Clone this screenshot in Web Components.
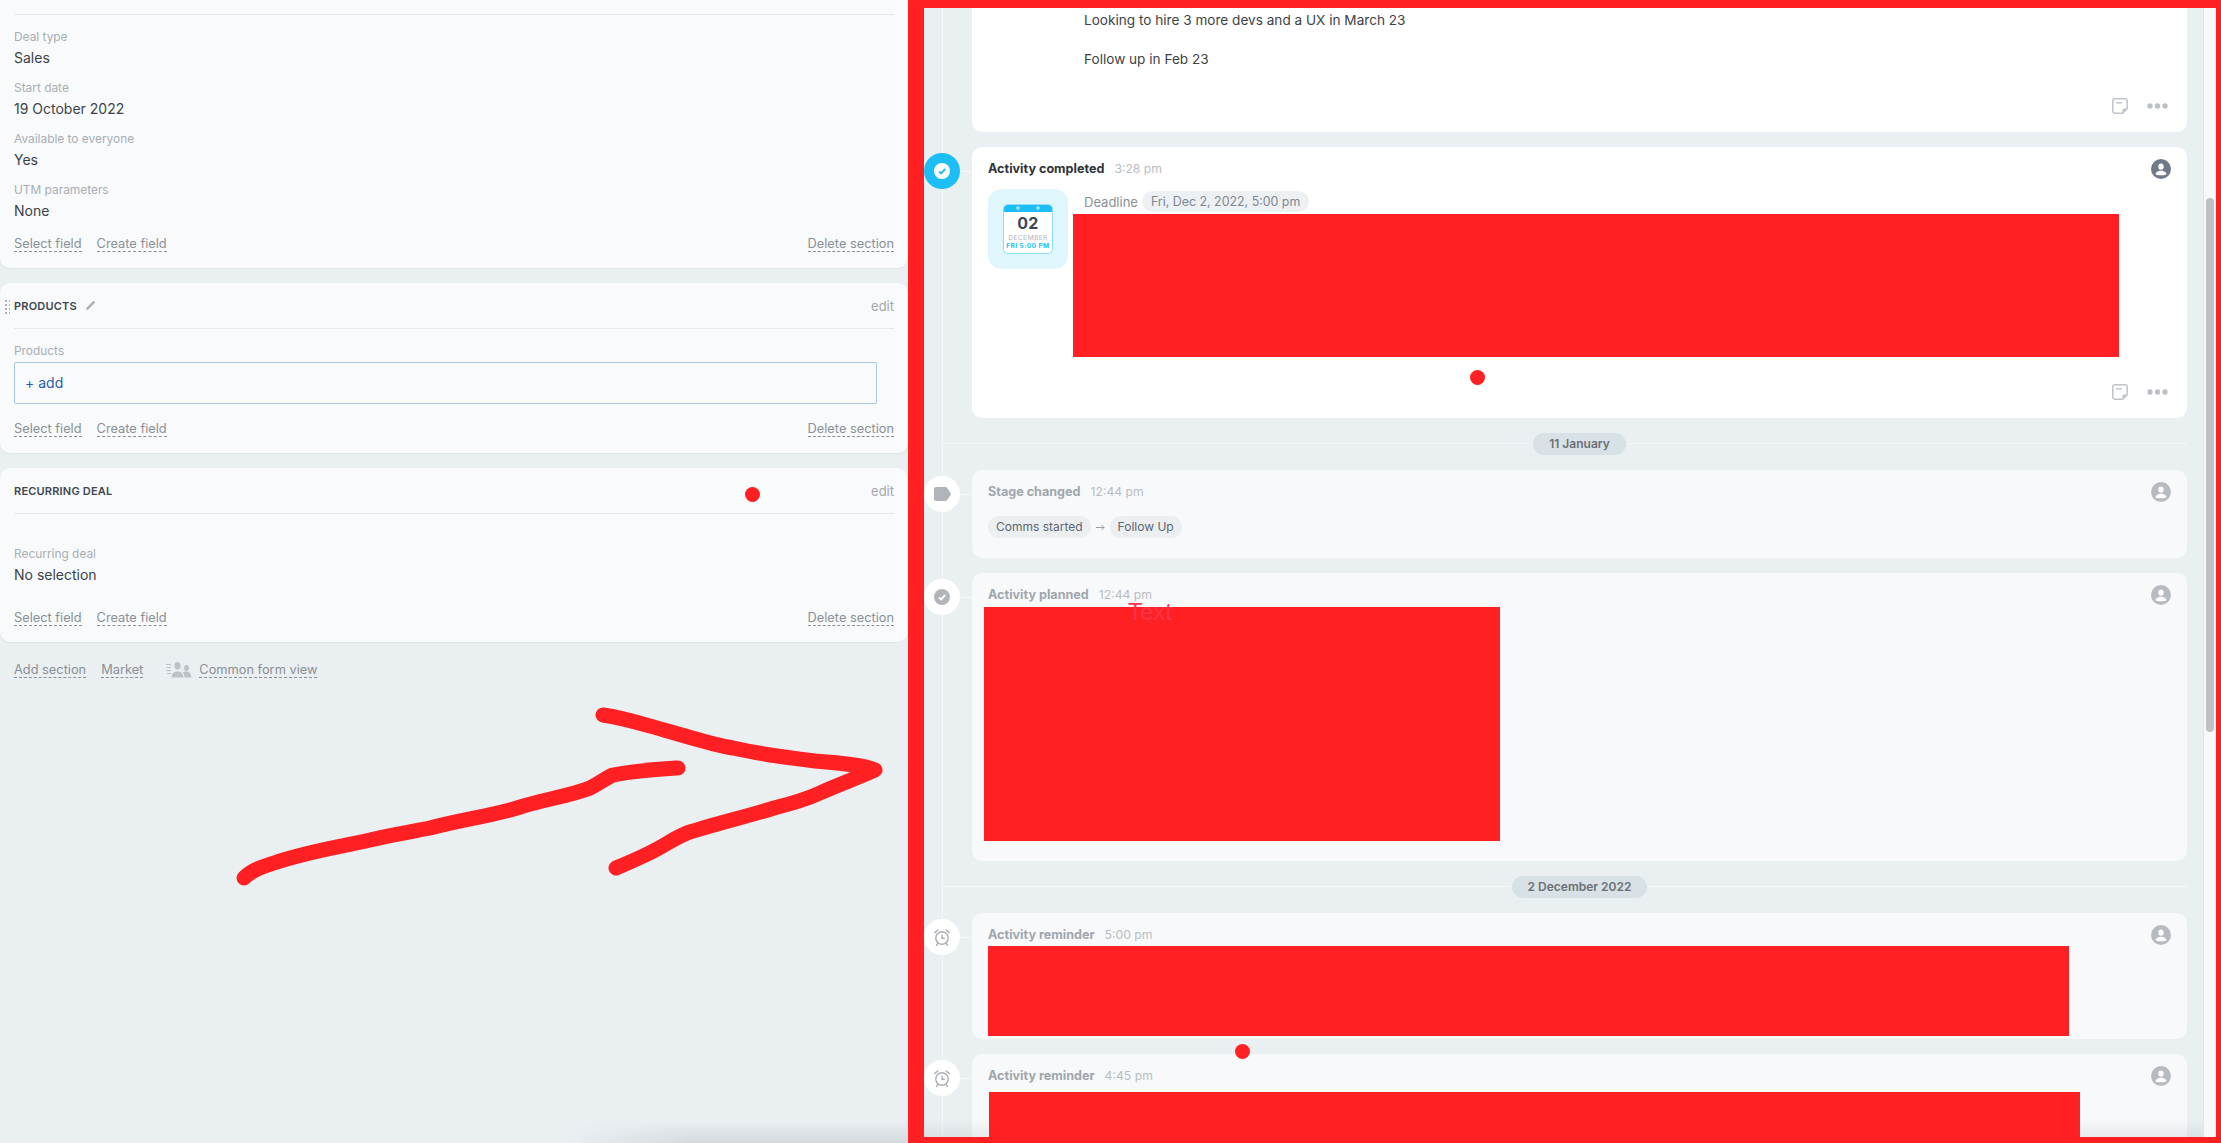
<!DOCTYPE html>
<html lang="en">
<head>
<meta charset="utf-8">
<title>Deal</title>
<style>
    html, body { margin: 0; height: 100%; overflow: hidden; }
    body { font-family: Inter, "Liberation Sans", sans-serif; background: #eaeff2; color: #3d4248; }
</style>
</head>
<body>
<deal-page>
    <deal-panel slot="left">
        <form-card style="--body-top: 14px; --foot-gap: 15px" flat>
            <form-field><span slot="label">Deal type</span>Sales</form-field>
            <form-field><span slot="label">Start date</span>19 October 2022</form-field>
            <form-field><span slot="label">Available to everyone</span>Yes</form-field>
            <form-field><span slot="label">UTM parameters</span>None</form-field>
        </form-card>
        <form-card style="--body-top: 14px; --foot-gap: 17px">
            <span slot="title">PRODUCTS</span>
            <drag-handle slot="drag"></drag-handle>
            <edit-pencil slot="pencil"></edit-pencil>
            <form-field><span slot="label">Products</span><add-box>+ add</add-box></form-field>
        </form-card>
        <form-card style="--body-top: 32px; --foot-gap: 25px">
            <span slot="title">RECURRING DEAL</span>
            <form-field><span slot="label">Recurring deal</span>No selection</form-field>
        </form-card>
        <panel-links></panel-links>
    </deal-panel>

    <activity-feed slot="right">
        <feed-item top>
            <note-card plain>
                <p>Looking to hire 3 more devs and a UX in March 23</p>
                <p>&nbsp;</p>
                <p>Follow up in Feb 23</p>
            </note-card>
        </feed-item>
        <feed-item kind="done" active>
            <item-head active><span slot="title">Activity completed</span><span slot="time">3:28 pm</span></item-head>
            <deadline-body></deadline-body>
        </feed-item>
        <date-sep>11 January</date-sep>
        <feed-item kind="tag">
            <item-head><span slot="title">Stage changed</span><span slot="time">12:44 pm</span></item-head>
            <stage-pills></stage-pills>
        </feed-item>
        <feed-item kind="check">
            <item-head><span slot="title">Activity planned</span><span slot="time">12:44 pm</span></item-head>
            <red-block style="--w: 516px; --h: 234px; --l: 12px; --t: 2px; --b: 20px"></red-block>
        </feed-item>
        <date-sep>2 December 2022</date-sep>
        <feed-item kind="alarm">
            <item-head><span slot="title">Activity reminder</span><span slot="time">5:00 pm</span></item-head>
            <red-block style="--w: 1081px; --h: 90px; --l: 16px; --t: 1px; --b: 3px"></red-block>
        </feed-item>
        <feed-item kind="alarm">
            <item-head><span slot="title">Activity reminder</span><span slot="time">4:45 pm</span></item-head>
            <red-block style="--w: 1091px; --h: 60px; --l: 17px; --t: 6px; --b: 0px"></red-block>
        </feed-item>
    </activity-feed>
</deal-page>
<red-marks></red-marks>

<script>
const checkPath = 'M5 8.3l2.1 2.1L11.2 6'
const icons = {
    avatar: (color) => `<svg width="20" height="20" viewBox="0 0 20 20"><circle cx="10" cy="10" r="10" fill="${color}"/><ellipse cx="10" cy="7.6" rx="2.7" ry="3.2" fill="#fff"/><path d="M4.6 14.9c0-1.9 3-2.6 4-3.1h2.8c1 .5 4 1.2 4 3.1 0 .6-2 1.3-5.4 1.3s-5.4-.7-5.4-1.3z" fill="#fff"/></svg>`,
    note: `<svg width="16" height="16" viewBox="0 0 16 16"><path d="M3 .8h10A2.2 2.2 0 0 1 15.2 3v7.6l-4.6 4.6H3A2.2 2.2 0 0 1 .8 13V3A2.2 2.2 0 0 1 3 .8z" fill="none" stroke="#bfc4ca" stroke-width="1.5"/><path d="M10.4 15.2v-3.1a1.6 1.6 0 0 1 1.6-1.6h3.2z" fill="#bfc4ca"/><path d="M4 4.8h6" stroke="#bfc4ca" stroke-width="1.4"/></svg>`,
    dots: `<svg width="21" height="6" viewBox="0 0 21 6" fill="#bcc1c7"><circle cx="3" cy="3" r="2.7"/><circle cx="10.5" cy="3" r="2.7"/><circle cx="18" cy="3" r="2.7"/></svg>`,
    done: `<svg width="16" height="16" viewBox="0 0 16 16"><circle cx="8" cy="8" r="8" fill="#fff"/><path d="${checkPath}" fill="none" stroke="#1dbef5" stroke-width="1.9"/></svg>`,
    check: `<svg width="16" height="16" viewBox="0 0 16 16"><circle cx="8" cy="8" r="8" fill="#b1b5ba"/><path d="${checkPath}" fill="none" stroke="#fff" stroke-width="1.9"/></svg>`,
    tag: `<svg width="17" height="14" viewBox="0 0 17 14"><path d="M2 0h9.5c.6 0 1.100.2 1.500.7l3.600 5.400c.3.5.3 1.300 0 1.800L13 13.300c-.4.500-.9.700-1.500.7H2a2 2 0 0 1-2-2V2a2 2 0 0 1 2-2z" fill="#b1b5ba"/></svg>`,
    alarm: `<svg width="18" height="19" viewBox="0 0 18 19" fill="none" stroke="#a9aeb4" stroke-width="1.4"><circle cx="9" cy="10" r="6.2"/><path d="M9 6.800V10.200h2.800"/><path d="M1.800 4.600L4.800 2M16.200 4.600L13.200 2M4.800 15.200L3.600 17.400M13.200 15.200L14.400 17.400" stroke-linecap="round"/></svg>`,
    team: `<svg width="26" height="16" viewBox="0 0 26 16" fill="#bcc2c7"><path d="M0 2h5v1H0zM0 5h5v1H0zM0 8h5v1H0zM1 11h4v1H1z"/><ellipse cx="11.500" cy="3.800" rx="3.100" ry="3.800"/><path d="M5.500 15.500c.3-4 2.500-5.600 4.500-6h3c2 .4 4.200 2 4.500 6z"/><ellipse cx="20.500" cy="6" rx="2.400" ry="3"/><path d="M18.500 15.500c0-2.500-.7-4-1.800-5 .8-.6 1.800-.9 2.800-.9h2c2 .4 3.800 2.200 4 5.900z"/></svg>`,
}

// small base class, every element just clones its own markup into an open shadow root
class ShadowElement extends HTMLElement {
    constructor() {
        super()
        const template = document.createElement('template')
        template.innerHTML = this.markup()
        this.attachShadow({mode: 'open'}).append(template.content.cloneNode(true))
    }
}

class DealPage extends ShadowElement {
    markup() {
        return `
            <style>
                :host { display: grid; grid-template-columns: 908px 1fr; height: 1143px; }
            </style>
            <slot name="left"></slot>
            <slot name="right"></slot>
        `
    }
}

class DealPanel extends ShadowElement {
    markup() {
        return `
            <style>
                :host { display: flex; flex-direction: column; gap: 15px; position: relative; height: 1143px; overflow: hidden; }
                .bottom-shade {
                    position: absolute; right: 0; bottom: 0; width: 340px; height: 22px;
                    background: linear-gradient(transparent, rgba(70, 80, 80, .13));
                    -webkit-mask-image: linear-gradient(to right, transparent, #000 35%);
                }
            </style>
            <slot></slot>
            <div class="bottom-shade"></div>
        `
    }
}

class FormCard extends ShadowElement {
    markup() {
        const flat = this.hasAttribute('flat')
        return `
            <style>
                :host {
                    display: block; position: relative; background: #f8fafc;
                    border-radius: ${flat ? '0 0 10px 10px' : '10px'};
                    box-shadow: 0 1px 2px rgba(60, 70, 80, .06);
                }
                .head {
                    height: ${flat ? '14px' : '45px'}; margin: 0 14px; border-bottom: 1px solid #e7eaed;
                    display: flex; align-items: center; gap: 8px;
                    font-size: 11px; font-weight: 600; color: #3f4751; letter-spacing: .2px;
                }
                .edit { margin-left: auto; font-size: 13px; font-weight: 400; color: #a3a8ae; letter-spacing: 0; }
                .body { padding: var(--body-top) 14px 16px; display: flex; flex-direction: column; gap: 12px; }
                form-links { margin-top: calc(var(--foot-gap) - 12px); }
                ::slotted([slot="drag"]) { position: absolute; left: 4px; top: 16px; }
            </style>
            <div class="head">
                <slot name="drag"></slot>
                <slot name="title"></slot>
                <slot name="pencil"></slot>
                ${flat ? '' : '<span class="edit">edit</span>'}
            </div>
            <div class="body">
                <slot></slot>
                <form-links></form-links>
            </div>
        `
    }
}

class FormField extends ShadowElement {
    markup() {
        return `
            <style>
                :host { display: block; font-size: 14px; line-height: 20px; color: #3d4248; }
                .label { font-size: 11.900px; line-height: 16px; color: #a9aeb4; margin-bottom: 3px; }
            </style>
            <div class="label"><slot name="label"></slot></div>
            <slot></slot>
        `
    }
}

class DashLink extends ShadowElement {
    markup() {
        return `
            <style>
                :host {
                    display: inline-block; font-size: 12.800px; line-height: 15px; color: #8a9097;
                    border-bottom: 1px dashed #8a9097; white-space: nowrap;
                }
            </style>
            <slot></slot>
        `
    }
}

class FormLinks extends ShadowElement {
    markup() {
        return `
            <style>
                :host { display: flex; gap: 15px; }
                .last { margin-left: auto; }
            </style>
            <dash-link>Select field</dash-link>
            <dash-link>Create field</dash-link>
            <dash-link class="last">Delete section</dash-link>
        `
    }
}

class AddBox extends ShadowElement {
    markup() {
        return `
            <style>
                :host {
                    display: flex; align-items: center; box-sizing: border-box; height: 42px; width: 863px;
                    margin-top: 2px; padding-left: 10px; border: 1px solid #a9c6e4; border-radius: 2px;
                    font-size: 14px; color: #2a5ea8; background: #f8fafc;
                }
            </style>
            <slot></slot>
        `
    }
}

class DragHandle extends ShadowElement {
    markup() {
        return `
            <style>
                :host {
                    display: block; width: 6px; height: 15px;
                    background: radial-gradient(circle, #aeb3b9 .9px, transparent 1.100px) 0 0 / 4px 4px;
                }
            </style>
        `
    }
}

class EditPencil extends ShadowElement {
    markup() {
        return `
            <style>:host { display: block; height: 11px; margin-left: 0; }</style>
            <svg width="11" height="11" viewBox="0 0 11 11"><path d="M8.400.8l1.800 1.800L3.300 9.500 1 10l.5-2.300z" fill="#aeb3b9"/></svg>
        `
    }
}

class PanelLinks extends ShadowElement {
    markup() {
        return `
            <style>
                :host { display: flex; align-items: flex-start; gap: 15px; padding: 5px 14px 0; }
                svg { margin: 0 -8px 0 8px; }
            </style>
            <dash-link>Add section</dash-link>
            <dash-link>Market</dash-link>
            ${icons.team}
            <dash-link>Common form view</dash-link>
        `
    }
}

class ActivityFeed extends ShadowElement {
    markup() {
        return `
            <style>
                :host {
                    display: grid; grid-template-columns: 1fr 13px; box-sizing: border-box; height: 1143px;
                    border: solid #ff2023; border-width: 8px 5px 6px 16px; background: #eaeff2; position: relative; overflow: hidden;
                }
                .list {
                    display: flex; flex-direction: column; gap: 15px; padding-right: 16px; overflow: hidden;
                    background: linear-gradient(#f5f8fa, #f5f8fa) 18px 0 / 1px 100% no-repeat;
                }
                .bar { background: #f8f8f8; border-left: 1px solid #e3e5e6; padding: 190px 2px 0; }
                .thumb { height: 534px; width: 8px; border-radius: 4px; background: #c0c0c0; }
                .bottom-shade {
                    position: absolute; left: 0; right: 13px; bottom: 0; height: 18px; z-index: 1;
                    background: linear-gradient(transparent, rgba(70, 80, 80, .09));
                }
            </style>
            <div class="list"><slot></slot></div>
            <div class="bar"><div class="thumb"></div></div>
            <div class="bottom-shade"></div>
        `
    }
}

class FeedItem extends ShadowElement {
    markup() {
        const kind = this.getAttribute('kind')
        const active = this.hasAttribute('active')
        const marker = kind ? `<div class="marker ${active ? 'on' : ''}">${icons[kind]}</div><div class="tick"></div>` : ''
        return `
            <style>
                :host { display: grid; grid-template-columns: 36px 12px 1fr; flex: none; }
                .marker {
                    grid-column: 1; width: 36px; height: 36px; margin-top: 6px; border-radius: 50%; background: #fff;
                    display: flex; align-items: center; justify-content: center;
                }
                .marker.on { background: #1dbef5; }
                .tick { grid-column: 2; height: 1px; margin-top: 24px; background: #f5f8fa; }
                .card {
                    grid-column: 3; min-width: 0; border-radius: ${this.hasAttribute('top') ? '0 0 10px 10px' : '10px'};
                    background: ${active || this.hasAttribute('top') ? '#fff' : '#f7f9fb'};
                }
            </style>
            ${marker}
            <div class="card"><slot></slot></div>
        `
    }
}

class ItemHead extends ShadowElement {
    markup() {
        const active = this.hasAttribute('active')
        return `
            <style>
                :host { display: flex; align-items: center; height: 20px; padding: 12px 16px 0; font-size: 12.600px; }
                .title { font-weight: 700; color: ${active ? '#2f3338' : '#a0a6ad'}; margin-bottom: 2px; }
                .time { margin-left: 10px; font-size: 12.200px; color: #b9bdc3; margin-bottom: 2px; }
                svg { margin-left: auto; }
            </style>
            <span class="title"><slot name="title"></slot></span>
            <span class="time"><slot name="time"></slot></span>
            ${icons.avatar(active ? '#6e7a87' : '#b6bbc2')}
        `
    }
}

class CardActions extends ShadowElement {
    markup() {
        return `
            <style>
                :host { display: flex; align-items: center; justify-content: flex-end; gap: 19px; padding: 0 19px 18px 0; height: 16px; }
            </style>
            ${icons.note}
            ${icons.dots}
        `
    }
}

class NoteCard extends ShadowElement {
    markup() {
        return `
            <style>
                :host { display: block; padding: 3px 0 0 112px; height: 124px; box-sizing: border-box; position: relative; font-size: 13.600px; line-height: 19.500px; color: #3d4248; }
                ::slotted(p) { margin: 0; }
                card-actions { position: absolute; right: 0; bottom: 0; }
            </style>
            <slot></slot>
            <card-actions></card-actions>
        `
    }
}

class CalBadge extends ShadowElement {
    markup() {
        return `
            <style>
                :host {
                    display: flex; align-items: center; justify-content: center; flex: none;
                    width: 80px; height: 80px; border-radius: 14px; background: #e0f6fd;
                }
                .sheet {
                    box-sizing: border-box; width: 50px; height: 50px; background: #fff; border: 1px solid #8fdcf7; border-radius: 5px;
                    display: flex; flex-direction: column; align-items: center; overflow: hidden;
                }
                .top {
                    align-self: stretch; height: 8px; margin: -1px -1px 0; background: #1dbef5; flex: none;
                    display: flex; align-items: center; justify-content: center; gap: 16px;
                }
                .top i { width: 4px; height: 4px; border-radius: 50%; background: #8fdcf7; }
                .day { font-size: 16px; font-weight: 700; line-height: 19px; margin-top: 2px; color: #3c4858; letter-spacing: .3px; }
                .month { font-size: 6.800px; line-height: 9px; color: #b0b5bb; letter-spacing: .3px; white-space: nowrap; }
                .when { font-size: 6.600px; font-weight: 700; line-height: 9px; color: #1dbef5; letter-spacing: .4px; white-space: nowrap; }
            </style>
            <div class="sheet">
                <div class="top"><i></i><i></i></div>
                <div class="day">02</div>
                <div class="month">DECEMBER</div>
                <div class="when">FRI 5:00 PM</div>
            </div>
        `
    }
}

class DeadlineBody extends ShadowElement {
    markup() {
        return `
            <style>
                :host { display: block; }
                .row { display: flex; gap: 16px; padding: 10px 0 0 16px; }
                .line { display: flex; align-items: center; gap: 4px; height: 21px; margin-top: 2px; font-size: 13px; color: #8a9097; }
                .pill { padding: 0 9px; height: 21px; line-height: 21px; border-radius: 11px; background: #eef1f4; color: #7d8793; font-size: 12.400px; }
                card-actions { margin-top: 27px; }
                red-block { --w: 1046px; --h: 143px; --l: -11px; --t: 2px; --b: 0px; }
            </style>
            <div class="row">
                <cal-badge></cal-badge>
                <div>
                    <div class="line">Deadline <span class="pill">Fri, Dec 2, 2022, 5:00 pm</span></div>
                    <red-block></red-block>
                </div>
            </div>
            <card-actions></card-actions>
        `
    }
}

class StagePills extends ShadowElement {
    markup() {
        return `
            <style>
                :host { display: flex; align-items: center; gap: 5px; padding: 14px 16px 20px; font-size: 12px; color: #5c6570; }
                .pill { height: 22px; line-height: 22px; padding: 0 8px; border-radius: 11px; background: #eceff2; }
                svg { flex: none; }
            </style>
            <span class="pill">Comms started</span>
            <svg width="9" height="7" viewBox="0 0 9 7" fill="none" stroke="#9aa0a7"><path d="M0 3.500h8M5.500 1L8 3.500 5.500 6"/></svg>
            <span class="pill">Follow Up</span>
        `
    }
}

class RedBlock extends ShadowElement {
    markup() {
        return `
            <style>
                :host {
                    display: block; position: relative; z-index: 2; background: #ff2023;
                    width: var(--w); height: var(--h); margin: var(--t) 0 var(--b) var(--l);
                }
            </style>
        `
    }
}

class DateSep extends ShadowElement {
    markup() {
        return `
            <style>
                :host {
                    display: flex; justify-content: center; flex: none; padding-left: 48px;
                    background: linear-gradient(#f5f8fa, #f5f8fa) 18px 10px / calc(100% - 18px) 1px no-repeat;
                }
                span {
                    height: 22px; line-height: 22px; padding: 0 16px; border-radius: 11px; background: #d8e1e5;
                    box-shadow: 0 0 0 1px #eaeff2; font-size: 12px; font-weight: 600; color: #6a7075;
                }
            </style>
            <span><slot></slot></span>
        `
    }
}

// the hand drawn annotations that lie over the screenshot
class RedMarks extends ShadowElement {
    markup() {
        return `
            <style>
                :host { position: absolute; left: 0; top: 0; width: 2221px; height: 1143px; z-index: 5; pointer-events: none; }
                svg { position: absolute; left: 0; top: 0; }
                .dot { position: absolute; width: 15px; height: 15px; border-radius: 50%; background: #ff2023; }
                .label { position: absolute; left: 1128px; top: 598px; font: 24px/28px "Liberation Sans", sans-serif; color: #ff3547; }
            </style>
            <svg width="2221" height="1143" fill="none" stroke="#ff2023" stroke-width="15" stroke-linecap="round" stroke-linejoin="round">
                <path d="M244 878C252 870 262 867 274 863C310 851 340 847 370 840C390 835 410 832 430 828C460 820 490 816 517 808C545 799 570 796 590 788C600 783 606 778 613 775C640 770 660 769 678 768"/>
                <path d="M603 715C625 718 642 724 664 730C690 737 710 744 733 748C760 754 790 758 815 761C840 763 865 765 875 770C860 777 840 784 820 793C805 800 790 804 774 808C745 817 715 824 687 833C675 838 670 842 659 848C645 856 630 862 616 868"/>
            </svg>
            <div class="dot" style="left: 745px; top: 487px"></div>
            <div class="dot" style="left: 1470px; top: 370px"></div>
            <div class="dot" style="left: 1235px; top: 1044px"></div>
            <div class="label">Text</div>
        `
    }
}

customElements.define('deal-page', DealPage)
customElements.define('deal-panel', DealPanel)
customElements.define('form-card', FormCard)
customElements.define('form-field', FormField)
customElements.define('dash-link', DashLink)
customElements.define('form-links', FormLinks)
customElements.define('add-box', AddBox)
customElements.define('drag-handle', DragHandle)
customElements.define('edit-pencil', EditPencil)
customElements.define('panel-links', PanelLinks)
customElements.define('activity-feed', ActivityFeed)
customElements.define('feed-item', FeedItem)
customElements.define('item-head', ItemHead)
customElements.define('card-actions', CardActions)
customElements.define('note-card', NoteCard)
customElements.define('cal-badge', CalBadge)
customElements.define('deadline-body', DeadlineBody)
customElements.define('stage-pills', StagePills)
customElements.define('red-block', RedBlock)
customElements.define('date-sep', DateSep)
customElements.define('red-marks', RedMarks)
</script>
</body>
</html>
